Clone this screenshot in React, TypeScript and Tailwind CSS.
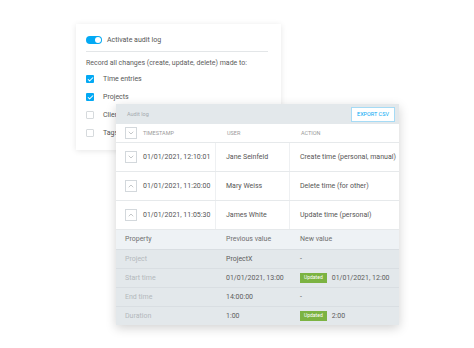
import { ChevronDown, ChevronUp, Check } from "lucide-react";

const font = { fontFamily: "Roboto, 'Liberation Sans', sans-serif" };

function Checkbox({ checked }: { checked?: boolean }) {
  return checked ? (
    <div className="w-[8px] h-[8px] rounded-[1px] bg-[#03a9f4] flex items-center justify-center">
      <Check size={7} strokeWidth={3.5} color="#fff" />
    </div>
  ) : (
    <div className="w-[8px] h-[8px] rounded-[1px] border border-[#d6dadd] bg-white" />
  );
}

function ChevronBox({ up }: { up?: boolean }) {
  return (
    <div className="w-[12px] h-[12px] border border-[#d3d8dc] bg-white flex items-center justify-center">
      {up ? (
        <ChevronUp size={8} strokeWidth={1.5} color="#8a9095" />
      ) : (
        <ChevronDown size={8} strokeWidth={1.5} color="#8a9095" />
      )}
    </div>
  );
}

function Badge() {
  return (
    <span className="inline-flex items-center h-[10px] px-[4px] bg-[#7cb342] text-white text-[5px] mr-[5px]">
      Updated
    </span>
  );
}

const rows = [
  { ts: "01/01/2021, 12:10:01", user: "Jane Seinfeld", action: "Create time (personal, manual)", up: false },
  { ts: "01/01/2021, 11:20:00", user: "Mary Weiss", action: "Delete time (for other)", up: true },
  { ts: "01/01/2021, 11:05:30", user: "James White", action: "Update time (personal)", up: true },
];

const details = [
  { prop: "Project", prev: "ProjectX", next: "-", updated: false },
  { prop: "Start time", prev: "01/01/2021, 13:00", next: "01/01/2021, 12:00", updated: true },
  { prop: "End time", prev: "14:00:00", next: "-", updated: false },
  { prop: "Duration", prev: "1:00", next: "2:00", updated: true },
];

export default function App() {
  return (
    <div className="relative w-[474px] h-[348px] bg-white overflow-hidden pt-[24px] pl-[76px]" style={font}>
      {/* settings card */}
      <div className="w-[205px] h-[126px] bg-white shadow-[0_1px_6px_rgba(0,0,0,0.10)] pt-[10px] pl-[10px] pr-[13px]">
        <div className="flex items-center h-[12px] gap-[5px]">
          <div className="w-[16px] h-[8px] rounded-full bg-[#03a9f4] flex items-center justify-end pr-[1px]">
            <div className="w-[6px] h-[6px] rounded-full bg-white" />
          </div>
          <span className="text-[7px] text-[#555]">Activate audit log</span>
        </div>
        <div className="mt-[5px] border-t border-[#e3e6e8]" />
        <div className="mt-[6px] h-[10px] flex items-center text-[7px] text-[#5c5c5c]">
          Record all changes (create, update, delete) made to:
        </div>
        <div className="pt-[2px]">
          {[
            { label: "Time entries", checked: true },
            { label: "Projects", checked: true },
            { label: "Clients", checked: false },
            { label: "Tags", checked: false },
          ].map((c) => (
            <div key={c.label} className="flex items-center h-[18px] gap-[9px]">
              <Checkbox checked={c.checked} />
              <span className="text-[7px] text-[#555]">{c.label}</span>
            </div>
          ))}
        </div>
      </div>

      {/* audit log card */}
      <div className="absolute left-[116px] top-[104px] w-[283px] bg-white shadow-[0_3px_10px_rgba(0,0,0,0.18)] overflow-hidden">
        <div className="h-[20px] bg-[#e3e8eb] flex items-center justify-between pl-[11px] pr-[4px]">
          <span className="text-[5.5px] text-[#a3a9ae]">Audit log</span>
          <div className="w-[44px] h-[15px] border border-[#a6dbf5] bg-white flex items-center justify-center text-[5.5px] text-[#03a9f4] uppercase">
            Export CSV
          </div>
        </div>
        <div className="grid grid-cols-[100px_74px_1fr] h-[19px] border-b border-[#e6e9eb] items-center text-[5.5px] text-[#9a9a9a] uppercase">
          <div className="flex items-center pl-[9px] gap-[6px]">
            <ChevronBox />
            <span>Timestamp</span>
          </div>
          <div className="pl-[11px]">User</div>
          <div className="pl-[11px]">Action</div>
        </div>
        {rows.map((r) => (
          <div key={r.ts} className="grid grid-cols-[100px_74px_1fr] h-[29px] border-b border-[#e6e9eb] text-[7px] text-[#555]">
            <div className="flex items-center pl-[9px] gap-[6px] border-r border-[#eef0f2]">
              <ChevronBox up={r.up} />
              <span>{r.ts}</span>
            </div>
            <div className="flex items-center pl-[10px] border-r border-[#eef0f2]">{r.user}</div>
            <div className="flex items-center pl-[10px] whitespace-nowrap">{r.action}</div>
          </div>
        ))}
        <div className="grid grid-cols-[100px_74px_1fr] h-[19px] items-center bg-[#eef2f5] text-[7px] text-[#707070]">
          <div className="pl-[9px]">Property</div>
          <div className="pl-[10px]">Previous value</div>
          <div className="pl-[10px]">New value</div>
        </div>
        {details.map((d) => (
          <div key={d.prop} className="grid grid-cols-[100px_74px_1fr] h-[19px] items-center bg-[#e3e8eb] border-t border-[#d9dee2] text-[7px]">
            <div className="pl-[9px] text-[#b3b8bc]">{d.prop}</div>
            <div className="pl-[10px] text-[#5c5c5c]">{d.prev}</div>
            <div className="pl-[10px] text-[#5c5c5c] flex items-center">
              {d.updated && <Badge />}
              <span>{d.next}</span>
            </div>
          </div>
        ))}
      </div>
    </div>
  );
}
